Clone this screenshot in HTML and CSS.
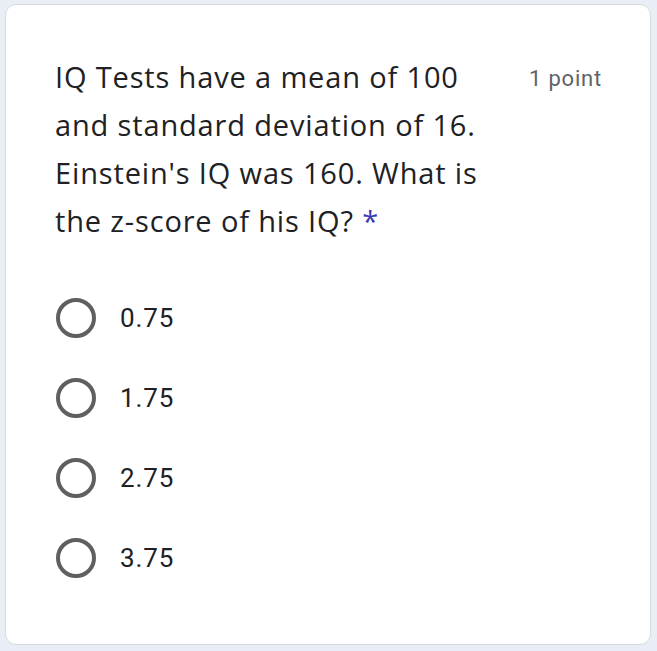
FILE: index.html
```html
<!DOCTYPE html>
<html>
<head>
<meta charset="utf-8">
<link rel="stylesheet" href="styles.css">
</head>
<body>
<div class="card">
  <div class="header">
    <div class="question">IQ Tests have a mean of 100<br>and standard deviation of 16.<br>Einstein's IQ was 160. What is<br>the z-score of his IQ? <span class="req">*</span></div>
    <div class="points">1 point</div>
  </div>
  <div class="options">
    <div class="option"><span class="radio"></span><span class="label">0.75</span></div>
    <div class="option"><span class="radio"></span><span class="label">1.75</span></div>
    <div class="option"><span class="radio"></span><span class="label">2.75</span></div>
    <div class="option"><span class="radio"></span><span class="label">3.75</span></div>
  </div>
</div>
</body>
</html>
```
FILE: styles.css
```css
html, body {
  margin: 0;
  padding: 0;
  background: #e9eef6;
}
body {
  padding: 4px 6px 6px 5px;
  font-family: Roboto, "Liberation Sans", sans-serif;
  color: #202124;
}
.card {
  box-sizing: border-box;
  height: 641px;
  background: #fff;
  border: 1px solid #d6dae0;
  border-radius: 11px;
  padding: 48px 48px 0 49px;
}
.header {
  display: flex;
  justify-content: space-between;
  align-items: flex-start;
}
.question {
  font-family: "Open Sans", sans-serif;
  font-size: 29px;
  line-height: 48px;
  color: #202124;
  letter-spacing: 0.85px;
}
.req {
  color: #3a3ab8;
}
.points {
  font-size: 22px;
  color: #5f6368;
  line-height: 48px;
  letter-spacing: 0.8px;
  margin-top: 2px;
}
.options {
  display: flex;
  flex-direction: column;
  gap: 40px;
  margin-top: 53px;
}
.option {
  display: flex;
  align-items: center;
  height: 40px;
}
.radio {
  box-sizing: border-box;
  width: 40px;
  height: 40px;
  border: 4px solid #5f5f5f;
  border-radius: 50%;
  margin-left: 1px;
}
.label {
  font-size: 26px;
  margin-left: 24px;
  color: #202124;
  letter-spacing: 0.9px;
}
```
